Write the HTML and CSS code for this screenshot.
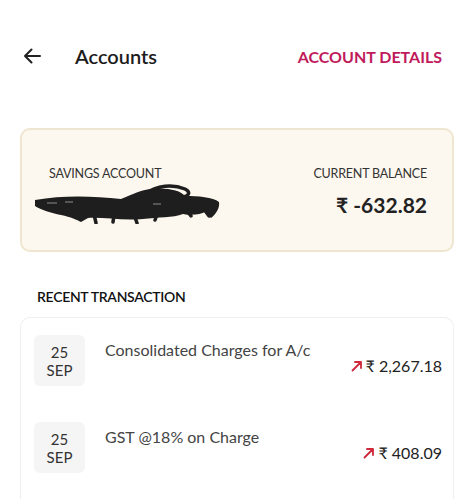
FILE: index.html
```html
<!DOCTYPE html>
<html>
<head>
<meta charset="utf-8">
<link rel="stylesheet" href="styles.css">
</head>
<body>
<div class="page">
  <header class="topbar">
    <div class="left">
      <svg class="back" width="20" height="18" viewBox="0 0 20 18"><path d="M18 9H3M9.5 2.5L3 9l6.5 6.5" fill="none" stroke="#222" stroke-width="2" stroke-linecap="round" stroke-linejoin="round"/></svg>
      <span class="title">Accounts</span>
    </div>
    <span class="details">ACCOUNT DETAILS</span>
  </header>

  <section class="account-card">
    <div class="acc-left">
      <div class="label">SAVINGS ACCOUNT</div>
      <svg class="scribble" width="190" height="40" viewBox="0 0 190 40">
        <path d="M2 16 C30 11 60 12 88 15 C100 10 108 6 118 5 C132 3 148 6 152 12 C165 12 180 13 186 18 C187 24 183 30 178 34 L172 28 C168 30 160 32 150 30 C140 34 125 33 110 35 C90 37 70 33 55 34 L48 38 C44 36 38 33 28 31 C18 29 8 26 2 22 Z" fill="#1e1e1e"/>
        <path d="M60 26 L63 39 M82 24 L80 38 M100 28 L104 39 M125 28 L122 36 M150 22 L158 32 M170 24 L176 32" stroke="#1e1e1e" stroke-width="3.5" stroke-linecap="round"/>
        <path d="M112 10 C124 1 140 0 152 5 C158 8 156 12 150 13" stroke="#1e1e1e" stroke-width="3.5" fill="none"/>
        <path d="M14 19 L24 19 M32 18 L40 18 M120 20 L128 20" stroke="#555" stroke-width="2"/>
      </svg>
    </div>
    <div class="acc-right">
      <div class="label">CURRENT BALANCE</div>
      <div class="balance">₹ -632.82</div>
    </div>
  </section>

  <h2 class="section-title">RECENT TRANSACTION</h2>

  <section class="tx-card">
    <div class="tx">
      <div class="date"><span>25</span><span>SEP</span></div>
      <div class="desc">Consolidated Charges for A/c</div>
      <div class="amount"><svg class="arrow" width="12" height="12" viewBox="0 0 12 12"><path d="M1.5 10.5L10 2M4 2h6v6" fill="none" stroke="#d0273a" stroke-width="1.8" stroke-linecap="round" stroke-linejoin="round"/></svg>₹ 2,267.18</div>
    </div>
    <div class="tx">
      <div class="date"><span>25</span><span>SEP</span></div>
      <div class="desc">GST @18% on Charge</div>
      <div class="amount"><svg class="arrow" width="12" height="12" viewBox="0 0 12 12"><path d="M1.5 10.5L10 2M4 2h6v6" fill="none" stroke="#d0273a" stroke-width="1.8" stroke-linecap="round" stroke-linejoin="round"/></svg>₹ 408.09</div>
    </div>
  </section>
</div>
</body>
</html>
```

FILE: styles.css
```css
* { box-sizing: border-box; }
html, body { margin: 0; padding: 0; background: #fff; }
body { font-family: Lato, "Noto Sans", sans-serif; color: #222; }
.page { width: 474px; height: 499px; overflow: hidden; padding: 0 20px; }

.topbar { display: flex; align-items: center; justify-content: space-between; height: 40px; margin-top: 36px; padding: 0 12px 0 2px; }
.left { display: flex; align-items: center; }
.back { margin-right: 33px; }
.title { font-size: 20px; font-weight: 600; color: #1c1c1c; }
.details { font-size: 16px; font-weight: 700; color: #c01a5c; }

.account-card { margin-top: 52px; height: 124px; background: #fdf8ef; border: 2px solid #efe6cf; border-radius: 10px; display: flex; justify-content: space-between; padding: 36px 25px 0 11px; }
.acc-left .label { margin-left: 16px; }
.label { font-size: 12.5px; color: #333; letter-spacing: -0.2px; }
.scribble { display: block; margin-top: 3px; }
.acc-right { text-align: right; }
.balance { font-size: 21px; font-weight: 700; color: #222; margin-top: 11px; }

.section-title { font-size: 14px; font-weight: 600; margin: 36px 0 0 17px; color: #111; letter-spacing: -0.3px; }

.tx-card { margin-top: 12px; border: 1px solid #efefef; border-bottom: none; border-radius: 10px 10px 0 0; padding: 17px 11px 0 13px; height: 200px; }
.tx { display: flex; align-items: flex-start; height: 87px; }
.date { width: 51px; height: 51px; background: #f5f5f5; border-radius: 6px; display: flex; flex-direction: column; align-items: center; justify-content: center; font-size: 15px; color: #333; line-height: 18px; }
.desc { flex: 1; margin-left: 20px; font-size: 16px; color: #444; margin-top: 5px; }
.amount { font-size: 16px; color: #222; margin-top: 21px; display: flex; align-items: center; }
.arrow { margin-right: 3px; }
```
